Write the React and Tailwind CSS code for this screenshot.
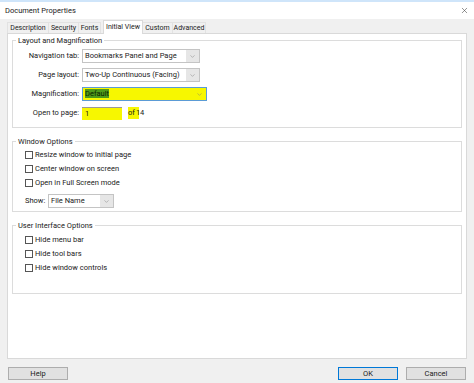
import React from 'react';
import { X, ChevronDown } from 'lucide-react';

const Select = ({ value, width, highlight }) => (
  <div
    className={`h-[14px] flex items-center border ${
      highlight ? 'bg-[#f7f700] border-[#5b9bd5]' : 'bg-white border-[#c4c4c4]'
    }`}
    style={{ width }}
  >
    <span className="flex-1 pl-[2px] truncate">
      {highlight ? <span className="bg-[#4f9a1a] text-[#0b1f00]">{value}</span> : value}
    </span>
    <span className={`h-full w-[13px] flex items-center justify-center ${highlight ? '' : 'bg-[#e6e6e6]'}`}>
      <ChevronDown size={7} strokeWidth={1.5} className="text-[#777]" />
    </span>
  </div>
);

const Row = ({ label, children }) => (
  <div className="flex items-center h-[14px]">
    <span className="w-[69px] pr-[3px] text-right">{label}</span>
    {children}
  </div>
);

const Check = ({ label }) => (
  <div className="flex items-center h-[14px] pl-[12px]">
    <span className="w-[8px] h-[8px] border border-[#555] bg-white mr-[2px]" />
    <span>{label}</span>
  </div>
);

const Group = ({ title, className, children }) => (
  <fieldset className={`border border-[#dcdcdc] ${className}`}>
    <legend className="ml-[3px] px-[2px] leading-[11px]">{title}</legend>
    {children}
  </fieldset>
);

const tabsLeft = [
  ['Description', 'w-[42px]'],
  ['Security', 'w-[31px]'],
  ['Fonts', 'w-[23px]'],
];
const tabsRight = [
  ['Custom', 'w-[31px]'],
  ['Advanced', 'w-[34px]'],
];

export default function App() {
  return (
    <div className="w-[474px] h-[383px] bg-[#f0f0f0] flex flex-col overflow-hidden text-[7.5px] text-[#1a1a1a] font-['Roboto','Noto_Sans',sans-serif]">
      {/* title bar */}
      <div className="h-[19px] bg-white border-t-2 border-[#cfe5fa] flex items-center justify-between pl-[5px] pr-[5px]">
        <span>Document Properties</span>
        <X size={9} strokeWidth={1.5} className="text-[#444]" />
      </div>

      {/* tabs */}
      <div className="h-[14px] px-[7px] flex items-end text-[7px]">
        {tabsLeft.map(([t, w]) => (
          <div key={t} className={`${w} h-[11px] flex items-center justify-center border border-b-0 border-[#e2e2e2] -ml-px first:ml-0`}>
            {t}
          </div>
        ))}
        <div className="w-[40px] h-[14px] ml-[2px] flex items-center justify-center bg-white border border-b-0 border-[#dadada] -mb-px relative z-10">
          Initial View
        </div>
        {tabsRight.map(([t, w]) => (
          <div key={t} className={`${w} h-[11px] flex items-center justify-center border border-b-0 border-[#e2e2e2] -ml-px`}>
            {t}
          </div>
        ))}
      </div>

      {/* panel */}
      <div className="mx-[7px] w-[460px] h-[326px] bg-white border border-[#d9d9d9] px-[4px]">
        <Group title="Layout and Magnification" className="mt-[1px] pt-[3px] pb-[7px]">
          <div className="flex flex-col gap-[5px]">
            <Row label="Navigation tab:">
              <Select value="Bookmarks Panel and Page" width={118} />
            </Row>
            <Row label="Page layout:">
              <Select value="Two-Up Continuous (Facing)" width={118} />
            </Row>
            <Row label="Magnification:">
              <Select value="Default" width={125} highlight />
            </Row>
            <Row label="Open to page:">
              <div className="h-[13px] w-[40px] bg-[#f7f700] border-t border-[#999] pl-[3px] flex items-center">1</div>
              <span className="ml-[6px] pr-[4px] bg-[#f7f700]">of</span>
              <span className="-ml-[3px]">14</span>
            </Row>
          </div>
        </Group>

        <Group title="Window Options" className="mt-[8px] pt-[1px] pb-[3px]">
          <Check label="Resize window to initial page" />
          <Check label="Center window on screen" />
          <Check label="Open in Full Screen mode" />
          <div className="flex items-center h-[14px] pl-[12px] mt-[4px]">
            <span className="w-[23px]">Show:</span>
            <Select value="File Name" width={66} />
          </div>
        </Group>

        <Group title="User Interface Options" className="mt-[8px] pt-[2px] pb-[18px]">
          <Check label="Hide menu bar" />
          <Check label="Hide tool bars" />
          <Check label="Hide window controls" />
        </Group>
      </div>

      {/* buttons */}
      <div className="flex items-center px-[8px] mt-[8px]">
        <button className="w-[60px] h-[13px] bg-[#e1e1e1] border border-[#adadad] leading-none">Help</button>
        <div className="flex-1" />
        <button className="w-[60px] h-[13px] bg-[#e1e1e1] border border-[#0078d7] leading-none">OK</button>
        <button className="w-[60px] h-[13px] ml-[8px] bg-[#e1e1e1] border border-[#adadad] leading-none">Cancel</button>
      </div>
    </div>
  );
}
